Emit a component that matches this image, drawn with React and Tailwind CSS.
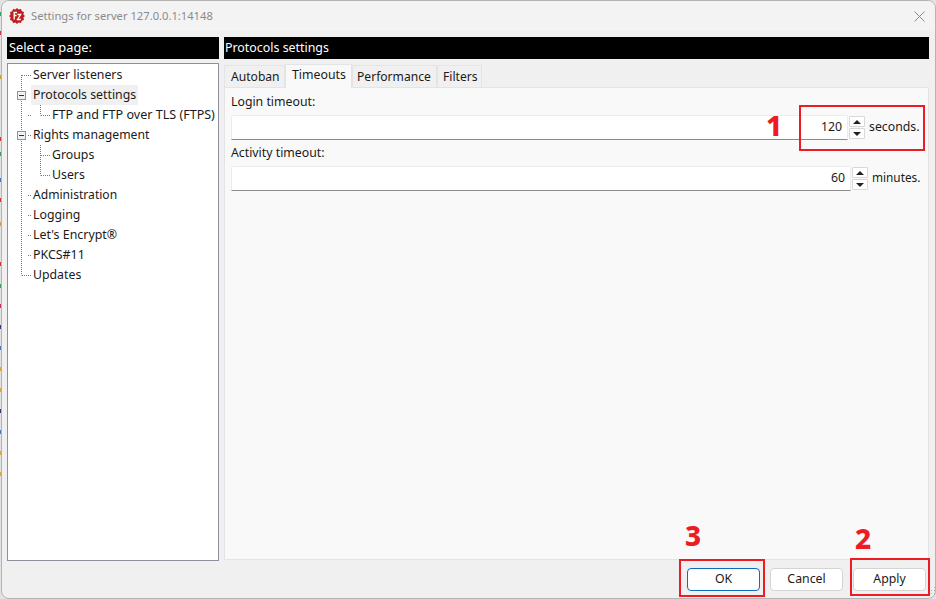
import React from 'react';

const font = { fontFamily: '"Noto Sans", "Liberation Sans", sans-serif' };

const treeRows = [
  { label: 'Server listeners', indent: 'pl-[25px] text-[12.3px]' },
  { label: 'Protocols settings', indent: 'pl-[25px] text-[12.3px]', selected: true },
  { label: 'FTP and FTP over TLS (FTPS)', indent: 'pl-[44px] text-[12.55px]' },
  { label: 'Rights management', indent: 'pl-[25px] text-[12.2px]' },
  { label: 'Groups', indent: 'pl-[44px] text-[12.3px]' },
  { label: 'Users', indent: 'pl-[44px] text-[12.3px]' },
  { label: 'Administration', indent: 'pl-[25px] text-[12.1px]' },
  { label: 'Logging', indent: 'pl-[25px] text-[12.3px]' },
  { label: "Let's Encrypt®", indent: 'pl-[25px] text-[12.4px]' },
  { label: 'PKCS#11', indent: 'pl-[25px] text-[12.4px]' },
  { label: 'Updates', indent: 'pl-[25px] text-[12.3px]' },
];

const tabs = [
  { label: 'Autoban', className: 'w-[61px] pl-[6px]' },
  { label: 'Timeouts', className: 'w-[67px] pl-[6px]', active: true },
  { label: 'Performance', className: 'w-[85px] pl-[4px]' },
  { label: 'Filters', className: 'w-[45px] pl-[5px]' },
];

// bits of the desktop showing at the left of the dialog
const desktopBits = [
  'top-[12px] bg-[#3c9a5f]',
  'top-[31px] bg-[#d0343c]',
  'top-[75px] bg-[#c9a13b]',
  'top-[137px] bg-[#d0343c]',
  'top-[152px] bg-[#3c9a5f]',
  'top-[178px] bg-[#4a78c0]',
  'top-[198px] bg-[#d0343c]',
  'top-[222px] bg-[#c9a13b]',
  'top-[262px] bg-[#d0343c]',
  'top-[284px] bg-[#3c9a5f]',
  'top-[304px] bg-[#d02a6a]',
  'top-[325px] bg-[#3a3a7a]',
  'top-[346px] bg-[#4a78c0]',
  'top-[367px] bg-[#d9a441]',
  'top-[388px] bg-[#d9a441]',
  'top-[409px] bg-[#3a3a7a]',
  'top-[430px] bg-[#4a78c0]',
  'top-[451px] bg-[#d9a441]',
  'top-[472px] bg-[#d9a441]',
];

const Logo = () => (
  <svg width="16" height="16" viewBox="0 0 16 16" className="shrink-0">
    <polygon
      points="8,0 9.6,1.6 12,1 12.8,3.2 15,4 14.4,6.4 16,8 14.4,9.6 15,12 12.8,12.8 12,15 9.6,14.4 8,16 6.4,14.4 4,15 3.2,12.8 1,12 1.6,9.6 0,8 1.6,6.4 1,4 3.2,3.2 4,1 6.4,1.6"
      fill="#bf1c1c"
    />
    <path d="M4.5 4.5h3.5M5.2 4.5v7M4.5 7.5h3M8.5 6.5h3.2l-3.2 5h3.4" fill="none" stroke="#fff" strokeWidth="1.3" />
  </svg>
);

// dotted connectors of the tree, coordinates are relative to the tree box
const TreeLines = () => (
  <svg width="60" height="230" className="absolute left-0 top-0" fill="none" stroke="#7a7a7a" strokeDasharray="1 1">
    <path d="M13.5 11V211.5M14 11.5H24" />
    <path d="M20 51.5H24M20 71.5H24M20 131.5H24M20 151.5H24M20 171.5H24M20 191.5H24M14 211.5H24" />
    <path d="M32.5 41V51.5M33 51.5H43M32.5 81V111.5M33 91.5H43M33 111.5H43" />
    <g stroke="#8a93a3" strokeDasharray="none">
      <rect x="9.5" y="27.5" width="8" height="8" fill="#eef1f5" />
      <rect x="9.5" y="67.5" width="8" height="8" fill="#eef1f5" />
      <path d="M11 31.5h5M11 71.5h5" stroke="#333" />
    </g>
  </svg>
);

const Spin = () => (
  <div className="flex flex-col gap-px w-[16px] shrink-0 mt-px ml-px">
    <div className="h-[11px] bg-white border border-[#d8d8d8] rounded-[1px] flex items-center justify-center">
      <span className="w-0 h-0 border-x-[4px] border-x-transparent border-b-[4px] border-b-[#222]" />
    </div>
    <div className="h-[11px] bg-white border border-[#d8d8d8] rounded-[1px] flex items-center justify-center">
      <span className="w-0 h-0 border-x-[4px] border-x-transparent border-t-[4px] border-t-[#222]" />
    </div>
  </div>
);

const TimeoutField = ({ label, value, unit, labelHeight, unitClass }) => (
  <div className="flex flex-col">
    <div className={`${labelHeight} pt-px flex items-center text-[12.3px] text-[#1a1a1a]`}>{label}</div>
    <div className="flex items-start h-[25px]">
      <div className="flex-1 h-[25px] bg-white border border-[#ececec] border-b-[#8a8a8a] rounded-t-[2px] flex items-center justify-end pr-[5px] text-[12.3px] text-[#1a1a1a]">
        {value}
      </div>
      <Spin />
      <div className={`ml-[4px] h-[24px] flex items-center whitespace-nowrap text-[#1a1a1a] ${unitClass}`}>{unit}</div>
    </div>
  </div>
);

const FooterButton = ({ children, primary }) => (
  <button
    className={`w-[73px] h-[23px] bg-white rounded-[4px] border text-[12.3px] text-[#1a1a1a] ${primary ? 'border-[#0f6cbd]' : 'border-[#d4d4d4]'}`}
  >
    {children}
  </button>
);

const Mark = ({ className, children }) => (
  <div className={`absolute text-[#ed1c24] font-extrabold text-[28px] leading-none ${className}`}>{children}</div>
);

const Box = ({ className }) => <div className={`absolute border-2 border-[#ed1c24] ${className}`} />;

export default function App() {
  return (
    <div style={font} className="relative w-[936px] h-[599px] overflow-hidden bg-[#e2e2e2]">
      {desktopBits.map((bit) => (
        <span key={bit} className={`absolute left-0 w-px h-[4px] ${bit}`} />
      ))}
      <div className="h-full ml-px flex flex-col bg-[#f0f0f0] border border-[#b4b4b4] rounded-lg overflow-hidden">
        {/* Title bar */}
        <div className="h-[30px] shrink-0 flex items-center pl-[7px] pr-[7px] bg-[#f3f3f3]">
          <Logo />
          <span className="ml-[6px] text-[11.2px] text-[#8a8a8a]">Settings for server 127.0.0.1:14148</span>
          <svg width="11" height="11" viewBox="0 0 11 11" className="ml-auto mr-[3px]" stroke="#8a8a8a" fill="none">
            <path d="M0.5 0.5l10 10M10.5 0.5l-10 10" />
          </svg>
        </div>

        <div className="flex-1 flex gap-[5px] pl-[5px] pr-[6px] pt-[6px] min-h-0">
          {/* Left column */}
          <div className="w-[212px] shrink-0 flex flex-col">
            <div className="h-[22px] shrink-0 bg-black text-white text-[12.8px] flex items-center pl-[2px]">Select a page:</div>
            <div className="relative mt-[4px] h-[498px] shrink-0 bg-white border border-[#8f8f9d] pt-px">
              <TreeLines />
              {treeRows.map((row) => (
                <div key={row.label} className={`relative h-[20px] flex items-center whitespace-nowrap text-[#1a1a1a] ${row.indent}`}>
                  <span className={row.selected ? 'bg-[#f0f0f0] px-[2px] -mx-[2px] h-[20px] flex items-center' : ''}>{row.label}</span>
                </div>
              ))}
            </div>
          </div>

          {/* Right column */}
          <div className="flex-1 flex flex-col min-w-0">
            <div className="h-[22px] shrink-0 bg-black text-white text-[12.4px] flex items-center pl-px">Protocols settings</div>
            <div className="h-[28px] shrink-0 flex items-end">
              {tabs.map((tab) => (
                <div
                  key={tab.label}
                  className={
                    tab.active
                      ? `${tab.className} h-[24px] -mb-px pb-[2px] z-10 bg-[#f9f9f9] border border-b-0 border-[#e4e4e4] text-[12.3px] text-[#1a1a1a] flex items-center`
                      : `${tab.className} h-[22px] pt-px bg-[#f0f0f0] border border-b-0 border-[#e4e4e4] text-[12.1px] text-[#1a1a1a] flex items-center`
                  }
                >
                  {tab.label}
                </div>
              ))}
            </div>
            <div className="flex-1 bg-[#f9f9f9] border border-[#e4e4e4] pl-[6px] pr-[8px] flex flex-col">
              <TimeoutField label="Login timeout:" value="120" unit="seconds." labelHeight="h-[27px]" unitClass="w-[51px] text-[12.3px]" />
              <TimeoutField label="Activity timeout:" value="60" unit="minutes." labelHeight="h-[26px]" unitClass="w-[48px] text-[11.8px]" />
            </div>
          </div>
        </div>

        {/* Buttons */}
        <div className="h-[38px] shrink-0 flex items-center justify-end gap-[10px] pr-[9px] pt-px">
          <FooterButton primary>OK</FooterButton>
          <FooterButton>Cancel</FooterButton>
          <FooterButton>Apply</FooterButton>
        </div>
      </div>

      {/* Resize grip in the corner */}
      <svg width="8" height="10" className="absolute right-0 bottom-[2px]" fill="#b0b0b0">
        <rect x="6" y="0" width="1" height="1" />
        <rect x="3" y="3" width="1" height="1" />
        <rect x="6" y="3" width="1" height="1" />
        <rect x="0" y="6" width="1" height="1" />
        <rect x="3" y="6" width="1" height="1" />
        <rect x="6" y="6" width="1" height="1" />
      </svg>

      {/* Red annotations drawn over the dialog */}
      <Box className="left-[799px] top-[105px] w-[126px] h-[46px]" />
      <Box className="left-[679px] top-[559px] w-[86px] h-[38px]" />
      <Box className="left-[850px] top-[558px] w-[80px] h-[38px]" />
      <Mark className="left-[766px] top-[111px]">1</Mark>
      <Mark className="left-[855px] top-[524px]">2</Mark>
      <Mark className="left-[685px] top-[521px]">3</Mark>
    </div>
  );
}
